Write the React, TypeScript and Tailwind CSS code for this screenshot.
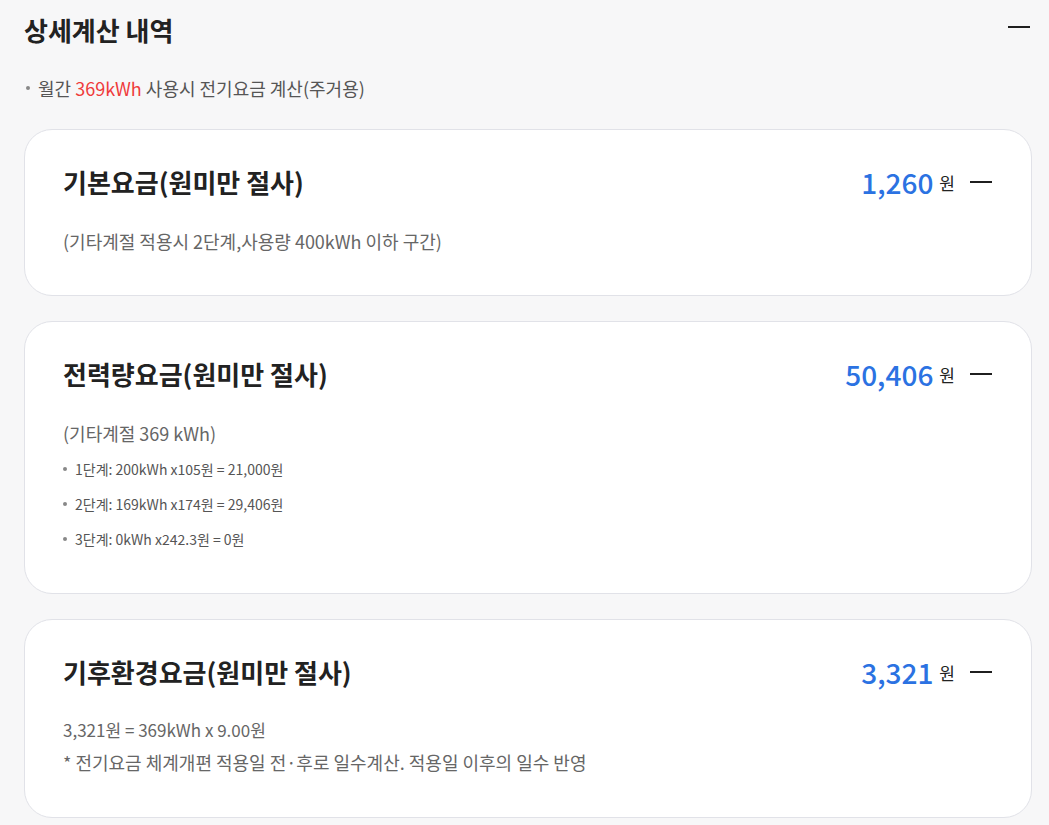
import React from "react";

const font = { fontFamily: '"Noto Sans CJK KR", "Noto Sans", sans-serif' };

function Minus({ className = "" }: { className?: string }) {
  return <span className={"block h-[2.5px] w-[22px] bg-[#1f1f1f] " + className} />;
}

function CardHeader({ title, amount }: { title: string; amount: string }) {
  return (
    <div className="flex items-center justify-between">
      <h3 className="text-[26px] leading-[32px] font-bold text-[#222]">{title}</h3>
      <div className="flex items-center">
        <span className="text-[28px] leading-[32px] font-medium text-[#2b72e2]">{amount}</span>
        <span className="ml-[6px] text-[17px] leading-[32px] text-[#222] mt-[2px]">원</span>
        <Minus className="ml-[15px]" />
      </div>
    </div>
  );
}

export default function App() {
  return (
    <div style={font} className="min-h-[825px] w-[1049px] bg-[#f7f7f8] pl-[24px] pr-[17px]">
      <div className="flex items-center justify-between pt-[14px]">
        <h2 className="text-[26px] leading-[32px] font-bold text-[#222]">상세계산 내역</h2>
        <Minus className="mr-[2px] -mt-[6px]" />
      </div>
      <div className="mt-[30px] flex items-center text-[18px] leading-[24px] text-[#555]">
        <span className="mx-[2px] inline-block h-[4px] w-[4px] rounded-full bg-[#888]" />
        <span className="ml-[6px]">
          월간 <span className="text-[#ef3b3b]">369kWh</span> 사용시 전기요금 계산(주거용)
        </span>
      </div>

      <div className="mt-[29px] flex flex-col gap-[25px]">
        <div className="rounded-[28px] border border-[#e1e2e8] bg-white pl-[38px] pr-[39px] pt-[35px] pb-[42px]">
          <CardHeader title="기본요금(원미만 절사)" amount="1,260" />
          <p className="mt-[30px] text-[18px] leading-[24px] text-[#666]">
            (기타계절 적용시 2단계,사용량 400kWh 이하 구간)
          </p>
        </div>

        <div className="rounded-[28px] border border-[#e1e2e8] bg-white pl-[38px] pr-[39px] pt-[35px] pb-[44px]">
          <CardHeader title="전력량요금(원미만 절사)" amount="50,406" />
          <p className="mt-[30px] text-[18px] leading-[24px] text-[#666]">(기타계절 369 kWh)</p>
          <ul className="mt-[14px] flex flex-col gap-[15px]">
            {[
              "1단계: 200kWh x105원 = 21,000원",
              "2단계: 169kWh x174원 = 29,406원",
              "3단계: 0kWh x242.3원 = 0원",
            ].map((t) => (
              <li key={t} className="flex h-[20px] items-center text-[14px] text-[#555]">
                <span className="inline-block h-[4px] w-[4px] rounded-full bg-[#888]" />
                <span className="ml-[8px]">{t}</span>
              </li>
            ))}
          </ul>
        </div>

        <div className="rounded-[28px] border border-[#e1e2e8] bg-white pl-[38px] pr-[39px] pt-[35px] pb-[43px]">
          <CardHeader title="기후환경요금(원미만 절사)" amount="3,321" />
          <p className="mt-[29px] text-[17px] leading-[24px] text-[#666]">3,321원 = 369kWh x 9.00원</p>
          <p className="mt-[8px] text-[18px] leading-[24px] text-[#666]">
            * 전기요금 체계개편 적용일 전·후로 일수계산. 적용일 이후의 일수 반영
          </p>
        </div>
      </div>
    </div>
  );
}
